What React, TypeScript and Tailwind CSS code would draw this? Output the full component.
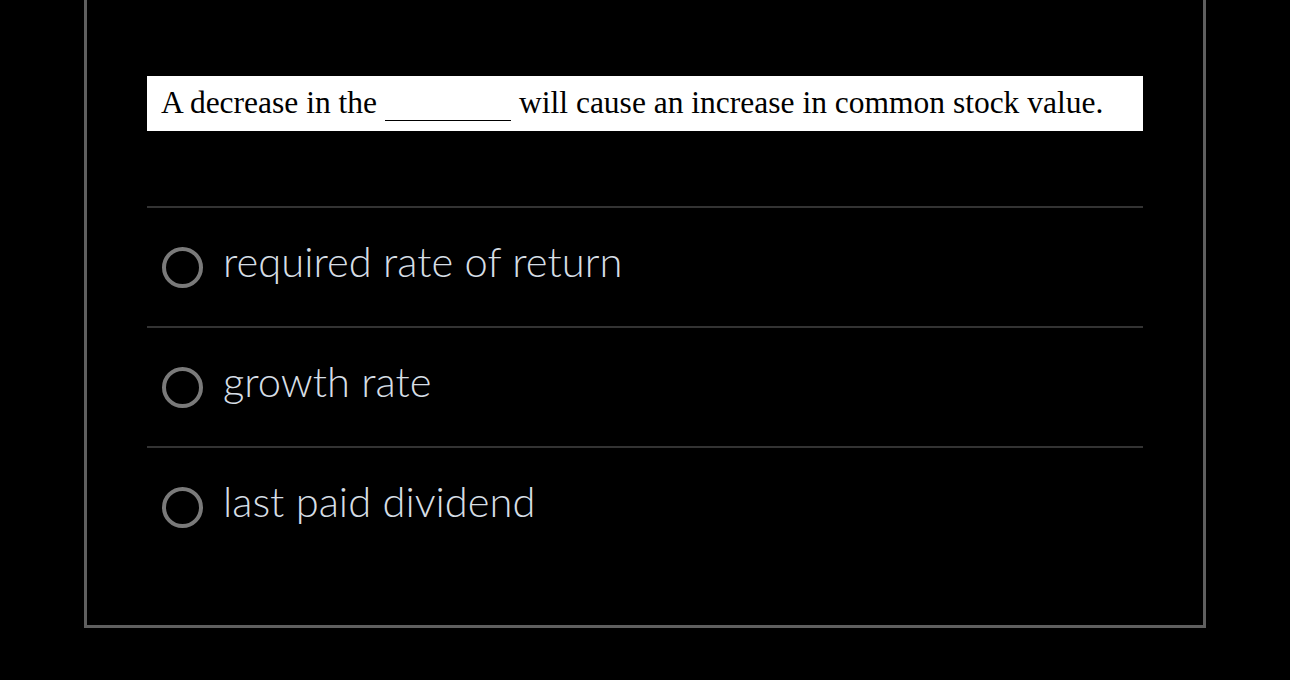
import React from "react";

const options = ["required rate of return", "growth rate", "last paid dividend"];

export default function App() {
  return (
    <div className="w-[1290px] h-[680px] bg-black overflow-hidden">
      <div className="ml-[84px] w-[1122px] h-[628px] border-x-[3px] border-b-[3px] border-[#5f5f5f] pl-[60px] pr-[60px] pt-[76px]">
        <div className="w-[996px] h-[55px] bg-white flex items-center pl-[14px] text-[31.5px] leading-none text-black whitespace-nowrap" style={{ fontFamily: '"Liberation Serif", serif' }}>
          <span className="-mt-[1px]">A decrease in the</span>
          <span className="inline-block w-[126px] h-[20px] border-b-[1px] border-black ml-[8px] mr-[8px] translate-y-[7px]"></span>
          <span className="-mt-[1px]">will cause an increase in common stock value.</span>
        </div>
        <div className="mt-[75px] w-[996px]">
          {options.map((o) => (
            <div key={o} className="border-t-2 border-[#333333] h-[120px] flex items-center pl-[15px]">
              <span className="w-[41px] h-[41px] rounded-full border-[4px] border-[#7a7a7a] shrink-0 mt-[1px]"></span>
              <span className="ml-[20px] text-[41.7px] font-light text-[#d6dee5] leading-none -mt-[10px]" style={{ fontFamily: 'Lato, sans-serif' }}>{o}</span>
            </div>
          ))}
        </div>
      </div>
    </div>
  );
}
